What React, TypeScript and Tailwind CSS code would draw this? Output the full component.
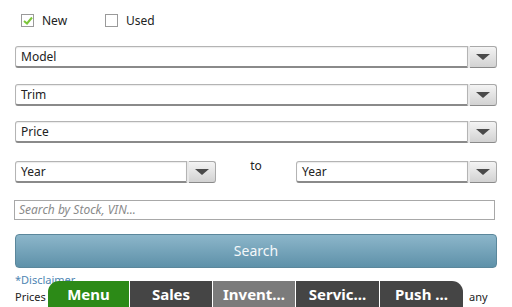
import React from "react";

function Arrow() {
    return (
        <div className="flex h-full w-[27px] shrink-0 items-center justify-center rounded-r-[3px] border border-l-0 border-[#a9a9a9] border-b-[#8a8a8a] bg-gradient-to-b from-[#f4f4f4] to-[#d2d2d2]">
            <svg width="16" height="8" viewBox="0 0 16 8">
                <path d="M1 1 L15 1 L8 7 Z" fill="#4a4a4a" />
            </svg>
        </div>
    );
}

function Select({ label, className }: { label: string; className?: string }) {
    return (
        <div className={"flex h-[22px] " + (className ?? "")}>
            <div className="flex flex-1 items-center rounded-l-[3px] border border-[#b4b4b4] border-b-[#8a8a8a] border-b-2 bg-white pl-[5px] text-[12px] leading-none text-[#222] shadow-[inset_0_1px_1px_rgba(0,0,0,0.08)]">
                {label}
            </div>
            <div className="w-[2px] bg-[#e8e8e8]" />
            <Arrow />
        </div>
    );
}

function Check({ checked, label }: { checked?: boolean; label: string }) {
    return (
        <div className="flex h-[13px] items-center">
            <div className="flex h-[13px] w-[13px] items-center justify-center border border-[#9a9a9a] bg-white">
                {checked && (
                    <svg width="10" height="9" viewBox="0 0 10 9">
                        <path d="M1 5 L4 7.5 L9 1.5" fill="none" stroke="#7cc63a" strokeWidth="2" />
                    </svg>
                )}
            </div>
            <span className="ml-[8px] text-[12px] leading-none text-[#222]">{label}</span>
        </div>
    );
}

const tabs = [
    { name: "Menu", cls: "bg-[#2c8a17] rounded-tl-[11px] w-[81px]" },
    { name: "Sales", cls: "bg-[#454545] w-[82px]" },
    { name: "Invent...", cls: "bg-[#7b7b7b] w-[82px]" },
    { name: "Servic...", cls: "bg-[#454545] w-[83px]" },
    { name: "Push ...", cls: "bg-[#454545] rounded-tr-[11px] w-[83px]" },
];

export default function App() {
    return (
        <div className="relative h-[307px] w-[512px] overflow-hidden bg-white font-['Noto_Sans',sans-serif]">
            <div className="flex flex-col px-[15px] pt-[14px]">
                <div className="flex pl-[6px]">
                    <div className="w-[84px]">
                        <Check checked label="New" />
                    </div>
                    <Check label="Used" />
                </div>
                <Select label="Model" className="mt-[19px]" />
                <Select label="Trim" className="mt-[16px]" />
                <Select label="Price" className="mt-[15px]" />
                <div className="mt-[18px] flex items-start">
                    <Select label="Year" className="w-[201px]" />
                    <div className="flex-1 text-center text-[12px] leading-none text-[#222]">
                        <span className="relative -top-[1px]">to</span>
                    </div>
                    <Select label="Year" className="w-[201px]" />
                </div>
                <div className="mt-[17px] mr-[2px] -ml-[1px] flex h-[20px] items-center border border-[#a8a8a8] bg-white pl-[4px] text-[12px] leading-none italic text-[#8a8a8a]">
                    Search by Stock, VIN...
                </div>
                <div className="mt-[14px] flex h-[34px] items-center justify-center rounded-[4px] border border-[#5b879b] bg-gradient-to-b from-[#8cb6ca] to-[#5e91a9] text-[14px] leading-none text-[#f4f8fa]">
                    Search
                </div>
                <div className="mt-[5px] text-[11px] leading-[13px] text-[#4f86b3]">*Disclaimer</div>
                <div className="mt-[4px] flex text-[11px] leading-[13px] text-[#222]">
                    <span className="w-[454px] shrink-0">Prices c</span>
                    <span>any</span>
                </div>
            </div>
            <div className="absolute bottom-0 left-[48px] flex h-[26px] gap-[1px]">
                {tabs.map((t) => (
                    <div
                        key={t.name}
                        className={"flex items-center justify-center text-[15px] font-bold leading-none text-white " + t.cls}
                    >
                        {t.name}
                    </div>
                ))}
            </div>
        </div>
    );
}
